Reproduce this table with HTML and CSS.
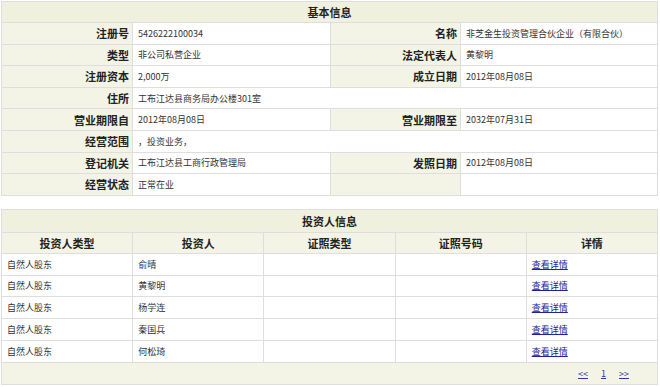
FILE: index.html
```html
<!DOCTYPE html>
<html lang="zh-CN">
<head>
<meta charset="utf-8">
<title>基本信息</title>
<link rel="stylesheet" href="styles.css">
</head>
<body>
<div class="page">
  <table class="info">
    <colgroup><col class="c-l"><col class="c-v"><col class="c-l2"><col></colgroup>
    <tr class="title"><th colspan="4">基本信息</th></tr>
    <tr><th>注册号</th><td>5426222100034</td><th>名称</th><td>非芝金生投资管理合伙企业（有限合伙）</td></tr>
    <tr><th>类型</th><td>非公司私营企业</td><th>法定代表人</th><td>黄黎明</td></tr>
    <tr><th>注册资本</th><td>2,000万</td><th>成立日期</th><td>2012年08月08日</td></tr>
    <tr><th>住所</th><td colspan="3">工布江达县商务局办公楼301室</td></tr>
    <tr><th>营业期限自</th><td>2012年08月08日</td><th>营业期限至</th><td>2032年07月31日</td></tr>
    <tr><th>经营范围</th><td colspan="3">，投资业务，</td></tr>
    <tr><th>登记机关</th><td>工布江达县工商行政管理局</td><th>发照日期</th><td>2012年08月08日</td></tr>
    <tr><th>经营状态</th><td>正常在业</td><th></th><td></td></tr>
  </table>

  <table class="inv">
    <colgroup><col><col><col><col><col></colgroup>
    <tr class="title"><th colspan="5">投资人信息</th></tr>
    <tr class="head"><th>投资人类型</th><th>投资人</th><th>证照类型</th><th>证照号码</th><th>详情</th></tr>
    <tr><td>自然人股东</td><td>俞晴</td><td></td><td></td><td><a href="#">查看详情</a></td></tr>
    <tr><td>自然人股东</td><td>黄黎明</td><td></td><td></td><td><a href="#">查看详情</a></td></tr>
    <tr><td>自然人股东</td><td>杨学连</td><td></td><td></td><td><a href="#">查看详情</a></td></tr>
    <tr><td>自然人股东</td><td>秦国兵</td><td></td><td></td><td><a href="#">查看详情</a></td></tr>
    <tr><td>自然人股东</td><td>何松琦</td><td></td><td></td><td><a href="#">查看详情</a></td></tr>
    <tr class="foot"><td colspan="5"><div class="pager"><a href="#" class="pg">&lt;&lt;</a><a href="#" class="pg">1</a><a href="#" class="pg">&gt;&gt;</a></div></td></tr>
  </table>
</div>
</body>
</html>
```

FILE: styles.css
```css
* { box-sizing: border-box; }
html, body {
  margin: 0;
  padding: 0;
  background: #ffffff;
}
body {
  font-family: "Noto Sans CJK SC", "Noto Sans", sans-serif;
  color: #333333;
}
.page {
  padding: 1px 0 0 1px;
  width: 659px;
}
table {
  width: 657px;
  border-collapse: collapse;
  table-layout: fixed;
}
th, td {
  border: 1px solid #dedede;
  padding: 0;
  overflow: hidden;
  white-space: nowrap;
}
.info .c-l { width: 131px; }
.info .c-v { width: 198px; }
.info .c-l2 { width: 130px; }
.info tr { height: 21.6px; }
.info tr.title { height: 21px; }
.title th {
  background: #eff1de;
  font-size: 11px;
  font-weight: bold;
  color: #222222;
  text-align: center;
  line-height: 14px;
}
.info th {
  background: #f3f4e6;
  font-size: 11px;
  font-weight: bold;
  color: #222222;
  text-align: right;
  padding-right: 3px;
}
.info .title th { text-align: center; background: #eff1de; padding: 0; }
.info td {
  font-size: 9px;
  color: #333333;
  padding-left: 5px;
  background: #ffffff;
}

.inv { margin-top: 13px; }
.inv tr.title { height: 23px; }
.inv tr.head { height: 21px; }
.inv tr { height: 21.8px; }
.inv tr.foot { height: 22px; }
.inv .head th {
  background: #f3f4e6;
  font-size: 11px;
  font-weight: bold;
  color: #222222;
  text-align: center;
}
.inv td {
  font-size: 9px;
  color: #333333;
  padding-left: 5px;
}
.inv a {
  color: #22229a;
  text-decoration: underline;
}
.inv .foot td {
  background: #f3f4e6;
  padding: 0;
}
.pager {
  display: flex;
  justify-content: flex-end;
  gap: 13px;
  padding-right: 28px;
  font-size: 9px;
}
.pager .pg {
  color: #3333aa;
}
```
